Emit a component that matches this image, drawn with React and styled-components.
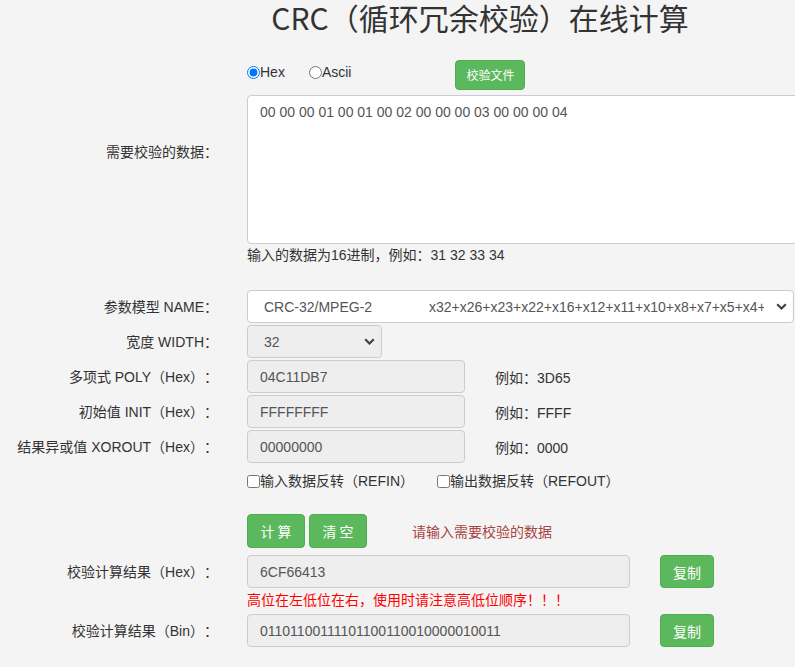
import React from "react";
import styled, { createGlobalStyle } from "styled-components";

const Global = createGlobalStyle`
  html, body { margin: 0; padding: 0; background: #f4f4f4; overflow: hidden; }
  body {
    font-family: "Liberation Sans", "Noto Sans CJK SC", sans-serif;
    font-size: 14px;
    color: #333;
    text-spacing-trim: space-all;
  }
  * { box-sizing: border-box; }
`;

const Page = styled.div`
  width: 795px;
  height: 667px;
  overflow: hidden;
`;

const Header = styled.div`
  width: 960px;
  height: 60px;
  text-align: center;
`;

const Title = styled.h1`
  margin: 0;
  font-family: "Noto Sans CJK SC", "Liberation Sans", sans-serif;
  font-size: 30px;
  font-weight: 400;
  line-height: 34px;
  color: #333;
`;

const Form = styled.div`
  display: flex;
  flex-direction: column;
`;

const Row = styled.div`
  display: flex;
  align-items: center;
  margin-top: ${(p) => p.$mt || 0}px;
  height: ${(p) => (p.$h ? `${p.$h}px` : "auto")};
`;

const Label = styled.div`
  width: 247px;
  flex-shrink: 0;
  text-align: right;
  padding-right: 29px;
  line-height: 20px;
  color: #333;
  white-space: nowrap;
`;

const Field = styled.div`
  flex: 1;
  min-width: 0;
  display: flex;
  align-items: center;
`;

const FieldColumn = styled.div`
  flex: 1;
  min-width: 0;
  display: flex;
  flex-direction: column;
`;

const RadioBar = styled.div`
  height: 30px;
  display: flex;
  align-items: flex-start;
`;

const RadioLabel = styled.label`
  display: inline-flex;
  align-items: center;
  margin-top: 2px;
  margin-right: ${(p) => p.$mr || 0}px;
  color: #333;
  line-height: 20px;
  input { margin: 0; width: 13px; height: 13px; }
`;

const GreenButton = styled.button`
  height: ${(p) => p.$h || 34}px;
  width: ${(p) => (p.$w ? `${p.$w}px` : "auto")};
  padding: 0 ${(p) => p.$px || 12}px;
  margin-left: ${(p) => p.$ml || 0}px;
  background: #5cb85c;
  border: 1px solid #4cae4c;
  border-radius: 4px;
  color: #fff;
  font-family: "Noto Sans CJK SC", "Liberation Sans", sans-serif;
  font-size: ${(p) => p.$fs || 14}px;
  line-height: 1;
  cursor: pointer;
  white-space: pre;
  flex-shrink: 0;
`;

const DataArea = styled.textarea`
  margin-top: 5px;
  width: 600px;
  height: 149px;
  padding: 6px 12px;
  border: 1px solid #ccc;
  border-radius: 4px;
  background: #fff;
  font-family: "Liberation Sans", sans-serif;
  font-size: 14px;
  line-height: 20px;
  color: #555;
  resize: none;
  outline: none;
`;

const Help = styled.div`
  padding-left: 247px;
  height: 22px;
  line-height: 22px;
  color: #333;
`;

const SelectBox = styled.div`
  width: ${(p) => p.$w}px;
  height: 33px;
  display: flex;
  align-items: center;
  padding: 0 6px 0 16px;
  border: 1px solid #ccc;
  border-radius: 4px;
  background: ${(p) => (p.$disabled ? "#eee" : "#fff")};
  color: #555;
  white-space: nowrap;
  overflow: hidden;
`;

const SelName = styled.span`
  width: 165px;
  flex-shrink: 0;
`;

const SelPoly = styled.span`
  width: 335px;
  flex-shrink: 0;
  overflow: hidden;
`;

const Chevron = styled.svg`
  margin-left: auto;
  flex-shrink: 0;
`;

const TextInput = styled.input`
  width: ${(p) => p.$w}px;
  height: 33px;
  padding: 0 12px;
  border: 1px solid #ccc;
  border-radius: 4px;
  background: #eee;
  font-family: "Liberation Sans", sans-serif;
  font-size: 14px;
  color: #555;
  outline: none;
  flex-shrink: 0;
`;

const Example = styled.span`
  margin-left: 30px;
  color: #333;
`;

const CheckLabel = styled.label`
  display: inline-flex;
  align-items: center;
  width: ${(p) => p.$w || "auto"};
  color: #333;
  line-height: 20px;
  input { margin: 0; width: 13px; height: 13px; }
`;

const Message = styled.span`
  margin-left: 45px;
  color: #a94442;
`;

const Warning = styled.div`
  padding-left: 247px;
  height: 26px;
  line-height: 24px;
  color: #f00;
`;

const ChevronIcon = () => (
  <Chevron width="11" height="7" viewBox="0 0 11 7">
    <path d="M1.2 1.2 L5.5 5.5 L9.8 1.2" fill="none" stroke="#444" strokeWidth="2.2" />
  </Chevron>
);

export default function App() {
  return (
    <Page>
      <Global />
      <Header>
        <Title>CRC（循环冗余校验）在线计算</Title>
      </Header>
      <Form>
        <Row>
          <Label>需要校验的数据：</Label>
          <FieldColumn>
            <RadioBar>
              <RadioLabel $mr={24}>
                <input type="radio" name="fmt" defaultChecked />
                Hex
              </RadioLabel>
              <RadioLabel>
                <input type="radio" name="fmt" />
                Ascii
              </RadioLabel>
              <GreenButton $h={30} $px={10} $fs={12} $ml={104}>
                校验文件
              </GreenButton>
            </RadioBar>
            <DataArea defaultValue="00 00 00 01 00 01 00 02 00 00 00 03 00 00 00 04" />
          </FieldColumn>
        </Row>
        <Help>输入的数据为16进制，例如：31 32 33 34</Help>

        <Row $mt={24}>
          <Label>参数模型 NAME：</Label>
          <Field>
            <SelectBox $w={547}>
              <SelName>CRC-32/MPEG-2</SelName>
              <SelPoly>x32+x26+x23+x22+x16+x12+x11+x10+x8+x7+x5+x4+x2+x+1</SelPoly>
              <ChevronIcon />
            </SelectBox>
          </Field>
        </Row>
        <Row $mt={2}>
          <Label>宽度 WIDTH：</Label>
          <Field>
            <SelectBox $w={135} $disabled>
              <span>32</span>
              <ChevronIcon />
            </SelectBox>
          </Field>
        </Row>
        <Row $mt={2}>
          <Label>多项式 POLY（Hex）：</Label>
          <Field>
            <TextInput $w={218} readOnly defaultValue="04C11DB7" />
            <Example>例如：3D65</Example>
          </Field>
        </Row>
        <Row $mt={2}>
          <Label>初始值 INIT（Hex）：</Label>
          <Field>
            <TextInput $w={218} readOnly defaultValue="FFFFFFFF" />
            <Example>例如：FFFF</Example>
          </Field>
        </Row>
        <Row $mt={2}>
          <Label>结果异或值 XOROUT（Hex）：</Label>
          <Field>
            <TextInput $w={218} readOnly defaultValue="00000000" />
            <Example>例如：0000</Example>
          </Field>
        </Row>

        <Row $mt={8} $h={20}>
          <Label />
          <Field>
            <CheckLabel $w="190px">
              <input type="checkbox" />
              输入数据反转（REFIN）
            </CheckLabel>
            <CheckLabel>
              <input type="checkbox" />
              输出数据反转（REFOUT）
            </CheckLabel>
          </Field>
        </Row>

        <Row $mt={23}>
          <Label />
          <Field>
            <GreenButton $w={58} $px={0}>计 算</GreenButton>
            <GreenButton $w={58} $px={0} $ml={4}>清 空</GreenButton>
            <Message>请输入需要校验的数据</Message>
          </Field>
        </Row>

        <Row $mt={7}>
          <Label>校验计算结果（Hex）：</Label>
          <Field>
            <TextInput $w={383} readOnly defaultValue="6CF66413" />
            <GreenButton $h={33} $w={54} $px={0} $ml={30}>复制</GreenButton>
          </Field>
        </Row>
        <Warning>高位在左低位在右，使用时请注意高低位顺序！！！</Warning>
        <Row>
          <Label>校验计算结果（Bin）：</Label>
          <Field>
            <TextInput $w={383} readOnly defaultValue="01101100111101100110010000010011" />
            <GreenButton $h={33} $w={54} $px={0} $ml={30}>复制</GreenButton>
          </Field>
        </Row>
      </Form>
    </Page>
  );
}
